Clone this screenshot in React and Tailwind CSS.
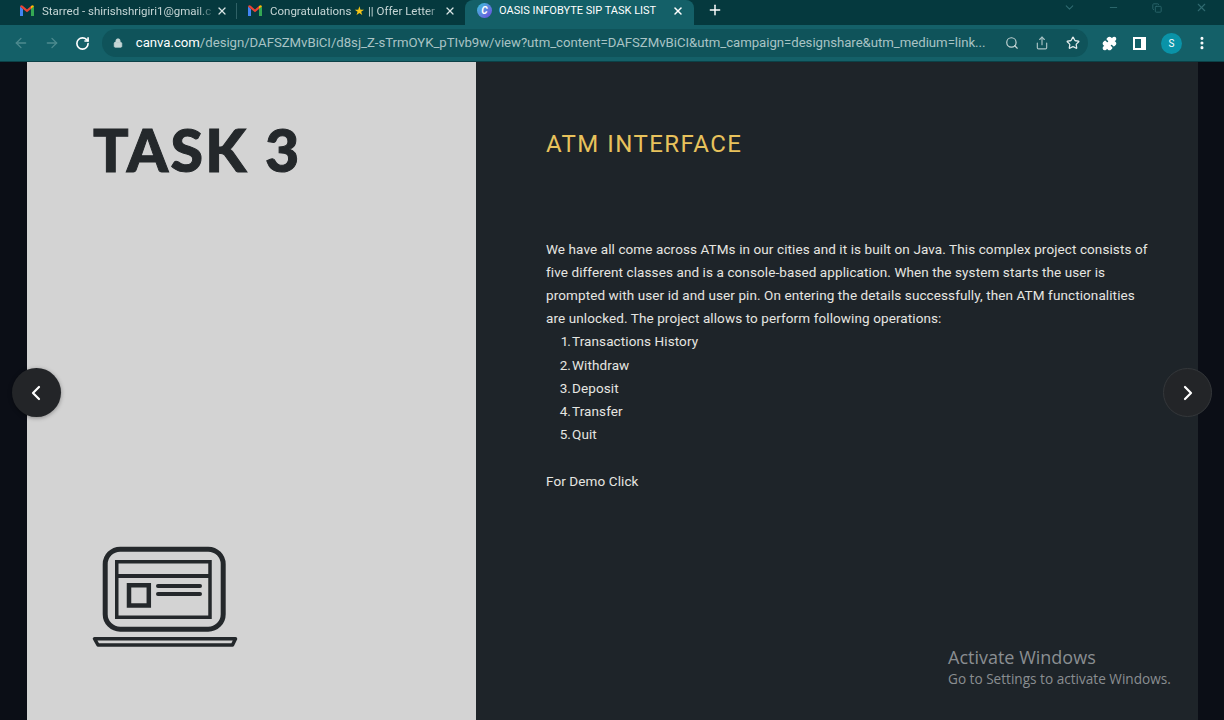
import React from "react";
import { ChevronLeft, ChevronRight, ArrowLeft, ArrowRight, RotateCw, Lock, Search, Share, Star, Puzzle, MoreVertical, X, Plus, Minus, ChevronDown, Copy } from "lucide-react";

function GmailIcon() {
  return (
    <svg width="14" height="11" viewBox="0 0 14 11" className="shrink-0">
      <path d="M0 1.5 L0 11 L3 11 L3 4 Z" fill="#4285f4" />
      <path d="M14 1.5 L14 11 L11 11 L11 4 Z" fill="#34a853" />
      <path d="M0 1.5 Q1 -0.5 3 1 L7 4.5 L11 1 L11 4 L7 7.2 L3 4 L0 1.5 Z" fill="#ea4335" />
      <path d="M11 1 Q13 -0.5 14 1.5 L11 4 Z" fill="#fbbc04" />
    </svg>
  );
}

function Tab({ title, divider, children }) {
  return (
    <div className="relative flex h-[21px] w-[228px] shrink-0 items-center pl-[20px]">
      <GmailIcon />
      <span className="ml-[8px] w-[173px] overflow-hidden whitespace-nowrap text-[11.5px] leading-[20px] text-[#c6d6d6] [mask-image:linear-gradient(to_right,black_90%,transparent)]">{title}{children}</span>
      <X size={12} strokeWidth={2.4} className="ml-[1px] text-[#d8e4e4]" />
      {divider && <div className="absolute right-[-9px] top-[3px] h-[16px] w-px bg-[#2f6166]" />}
    </div>
  );
}

function Laptop() {
  return (
    <svg width="146" height="104" viewBox="0 0 146 104" fill="none" stroke="#24282b">
      <rect x="13.2" y="4.2" width="118" height="80" rx="15" strokeWidth="5" />
      <rect x="24.75" y="16.75" width="93.25" height="55.5" strokeWidth="3.5" />
      <path d="M24 31 H119" strokeWidth="4" />
      <rect x="37" y="40.25" width="19.8" height="20.25" strokeWidth="4.5" />
      <path d="M66 41 H108 M66 49 H108" strokeWidth="4" strokeLinecap="round" />
      <path d="M2.5 93.75 H143.5 L140.5 100 H6 Z" strokeWidth="3.5" strokeLinejoin="round" />
    </svg>
  );
}

function Nav({ left }) {
  const Icon = left ? ChevronLeft : ChevronRight;
  return (
    <button className={"absolute top-[368px] flex h-[49px] w-[49px] items-center justify-center rounded-full bg-[#232528] text-white " + (left ? "left-[12px] pr-[1px] shadow-[0_1px_4px_rgba(0,0,0,0.35)]" : "right-[12px] border border-[#34373a]")}>
      <Icon size={24} strokeWidth={2.2} />
    </button>
  );
}

export default function App() {
  const items = ["Transactions History", "Withdraw", "Deposit", "Transfer", "Quit"];
  return (
    <div className="relative flex h-[720px] w-[1224px] flex-col overflow-hidden bg-[#0b0e16] font-['Roboto',sans-serif]">
      <div className="flex h-[25px] shrink-0 items-start bg-[#05393e]">
        <Tab title="Starred - shirishshrigiri1@gmail.c" divider />
        <Tab title="Congratulations ">
          <span className="text-[#f5c518]">★</span> || Offer Letter
        </Tab>
        <div className="ml-[9px] flex h-[25px] w-[229px] shrink-0 items-start rounded-t-[8px] bg-[#146068] pl-[12px]">
          <div className="mt-[3px] flex h-[15px] w-[15px] items-center justify-center rounded-full bg-gradient-to-br from-[#22c3d8] to-[#6a3ee0] text-[10px] font-bold italic leading-none text-white">C</div>
          <span className="ml-[7px] w-[173px] whitespace-nowrap text-[11px] leading-[21px] text-white">OASIS INFOBYTE SIP TASK LIST</span>
          <X size={12} strokeWidth={3} className="mt-[5px] text-white" />
        </div>
        <Plus size={16} strokeWidth={2.2} className="ml-[13px] mt-[2px] text-white" />
        <div className="ml-auto flex items-center pr-[16px] pt-[1px] text-[#2f6a70]">
          <ChevronDown size={13} />
          <Minus size={11} className="ml-[32px]" />
          <Copy size={10} className="ml-[33px]" />
          <X size={13} className="ml-[33px]" />
        </div>
      </div>
      <div className="flex h-[37px] shrink-0 items-center border-b border-[#0b4147] bg-[#146068] pl-[13px] pr-[14px]">
        <ArrowLeft size={16} className="text-[#4d8a8f]" />
        <ArrowRight size={16} className="ml-[15px] text-[#4d8a8f]" />
        <RotateCw size={15} strokeWidth={2.6} className="ml-[15px] text-white" />
        <div className="ml-[12px] flex h-[28px] w-[990px] items-center rounded-full bg-[#0f535a] pl-[11px]">
          <Lock size={10} fill="#c6d6d6" className="text-[#c6d6d6]" />
          <span className="ml-[13px] w-[856px] whitespace-nowrap text-[13.2px] tracking-[-0.03px] text-[#a9c3c5]"><span className="text-white">canva.com</span>/design/DAFSZMvBiCI/d8sj_Z-sTrmOYK_pTIvb9w/view?utm_content=DAFSZMvBiCI&utm_campaign=designshare&utm_medium=link...</span>
          <Search size={14} className="ml-[13px] text-[#c6d6d6]" />
          <Share size={14} className="ml-[16px] text-[#a9c3c5]" />
          <Star size={14} strokeWidth={2.2} className="ml-[17px] text-[#e0eaea]" />
        </div>
        <Puzzle size={15} fill="white" className="ml-[14px] text-white" />
        <div className="ml-[16px] h-[13px] w-[13px] border-2 border-r-[5px] border-white bg-[#146068]" />
        <div className="ml-[15px] flex h-[21px] w-[21px] items-center justify-center rounded-full bg-[#0a93a8] text-[10px] text-white">S</div>
        <MoreVertical size={16} strokeWidth={2.6} className="ml-[12px] text-white" />
      </div>
      <div className="flex min-h-0 flex-1 pl-[27px]">
        <section className="flex w-[449px] shrink-0 flex-col bg-[#d3d3d3] pl-[65px]">
          <h1 className="ml-[1px] mt-[53px] whitespace-nowrap font-['Lato',sans-serif] text-[59px] font-black leading-[70px] tracking-[2.3px] text-[#24282b] [-webkit-text-stroke:1px_#24282b]">TASK 3</h1>
          <div className="mt-[360px]"><Laptop /></div>
        </section>
        <section className="relative w-[722px] shrink-0 bg-[#1e2429] pl-[70px] pt-[66px]">
          <h2 className="whitespace-nowrap text-[24px] font-normal leading-[32px] tracking-[1.45px] text-[#e8c25c]">ATM INTERFACE</h2>
          <div className="mt-[77.5px] w-[620px] text-[13.5px] leading-[23.2px] tracking-[0.1px] text-[#e6e6e1]">
            <p>We have all come across ATMs in our cities and it is built on Java. This complex project consists of</p>
            <p>five different classes and is a console-based application. When the system starts the user is</p>
            <p>prompted with user id and user pin. On entering the details successfully, then ATM functionalities</p>
            <p>are unlocked. The project allows to perform following operations:</p>
            <ol>
              {items.map((t, i) => (
                <li key={t} className="flex">
                  <span className="w-[26px] pr-[1px] text-right proportional-nums">{i + 1}.</span>
                  <span>{t}</span>
                </li>
              ))}
            </ol>
            <p className="mt-[23.2px]">For Demo Click</p>
          </div>
          <div className="absolute left-[472px] top-[583px] whitespace-nowrap text-[#8a8e91]">
            <p className="font-['Open_Sans',sans-serif] text-[18px] leading-[24px]">Activate Windows</p>
            <p className="font-['Open_Sans',sans-serif] text-[13.6px] leading-[19px]">Go to Settings to activate Windows.</p>
          </div>
        </section>
      </div>
      <Nav left />
      <Nav />
    </div>
  );
}
